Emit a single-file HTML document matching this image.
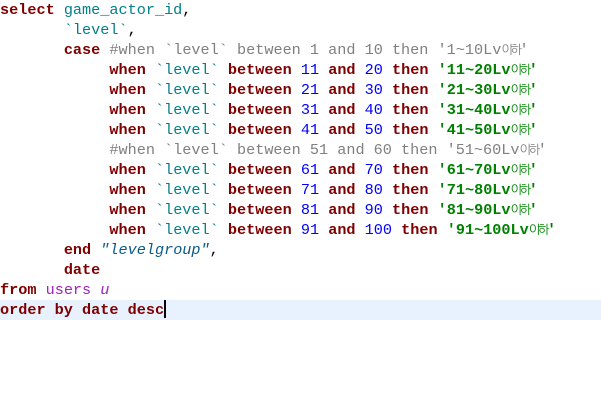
<!DOCTYPE html>
<html><head><meta charset="utf-8"><style>
html,body{margin:0;padding:0;background:#fff;width:601px;height:417px;overflow:hidden}
pre{margin:0;padding:0;font-family:"Liberation Mono",monospace;font-size:15.2px;line-height:20px;color:#000}
.l{height:20px;white-space:pre}
.hl{background:#e8f2fe}
.k{color:#7f0000;font-weight:bold}
.i{color:#00808a}
.c{color:#808080}
.n{color:#0000ff}
.s{color:#008000;font-weight:bold}
.p{color:#a020c0}
.q{color:#0a5a8a;font-style:italic}
.h{display:inline-block;width:9.12px;font-family:"NanumGothic","Noto Sans CJK KR",sans-serif;font-size:12.5px;font-weight:normal;text-align:center}
.cur{display:inline-block;width:2px;height:18px;background:#000;vertical-align:-4px}
</style></head><body><pre><div class="l"><span class="k">select</span> <span class="i">game_actor_id</span>,</div><div class="l">       <span class="i">`level`</span>,</div><div class="l">       <span class="k">case</span> <span class="c">#when `level` between 1 and 10 then '1~10Lv<span class="h">이</span><span class="h">하</span>'</span></div><div class="l">            <span class="k">when</span> <span class="i">`level`</span> <span class="k">between</span> <span class="n">11</span> <span class="k">and</span> <span class="n">20</span> <span class="k">then</span> <span class="s">'11~20Lv<span class="h">이</span><span class="h">하</span>'</span></div><div class="l">            <span class="k">when</span> <span class="i">`level`</span> <span class="k">between</span> <span class="n">21</span> <span class="k">and</span> <span class="n">30</span> <span class="k">then</span> <span class="s">'21~30Lv<span class="h">이</span><span class="h">하</span>'</span></div><div class="l">            <span class="k">when</span> <span class="i">`level`</span> <span class="k">between</span> <span class="n">31</span> <span class="k">and</span> <span class="n">40</span> <span class="k">then</span> <span class="s">'31~40Lv<span class="h">이</span><span class="h">하</span>'</span></div><div class="l">            <span class="k">when</span> <span class="i">`level`</span> <span class="k">between</span> <span class="n">41</span> <span class="k">and</span> <span class="n">50</span> <span class="k">then</span> <span class="s">'41~50Lv<span class="h">이</span><span class="h">하</span>'</span></div><div class="l">            <span class="c">#when `level` between 51 and 60 then '51~60Lv<span class="h">이</span><span class="h">하</span>'</span></div><div class="l">            <span class="k">when</span> <span class="i">`level`</span> <span class="k">between</span> <span class="n">61</span> <span class="k">and</span> <span class="n">70</span> <span class="k">then</span> <span class="s">'61~70Lv<span class="h">이</span><span class="h">하</span>'</span></div><div class="l">            <span class="k">when</span> <span class="i">`level`</span> <span class="k">between</span> <span class="n">71</span> <span class="k">and</span> <span class="n">80</span> <span class="k">then</span> <span class="s">'71~80Lv<span class="h">이</span><span class="h">하</span>'</span></div><div class="l">            <span class="k">when</span> <span class="i">`level`</span> <span class="k">between</span> <span class="n">81</span> <span class="k">and</span> <span class="n">90</span> <span class="k">then</span> <span class="s">'81~90Lv<span class="h">이</span><span class="h">하</span>'</span></div><div class="l">            <span class="k">when</span> <span class="i">`level`</span> <span class="k">between</span> <span class="n">91</span> <span class="k">and</span> <span class="n">100</span> <span class="k">then</span> <span class="s">'91~100Lv<span class="h">이</span><span class="h">하</span>'</span></div><div class="l">       <span class="k">end</span> <span class="q">"levelgroup"</span>,</div><div class="l">       <span class="k">date</span></div><div class="l"><span class="k">from</span> <span class="p">users</span> <span class="p" style="font-style:italic">u</span></div><div class="l hl"><span class="k">order by date desc</span><span class="cur"></span></div></pre></body></html>
